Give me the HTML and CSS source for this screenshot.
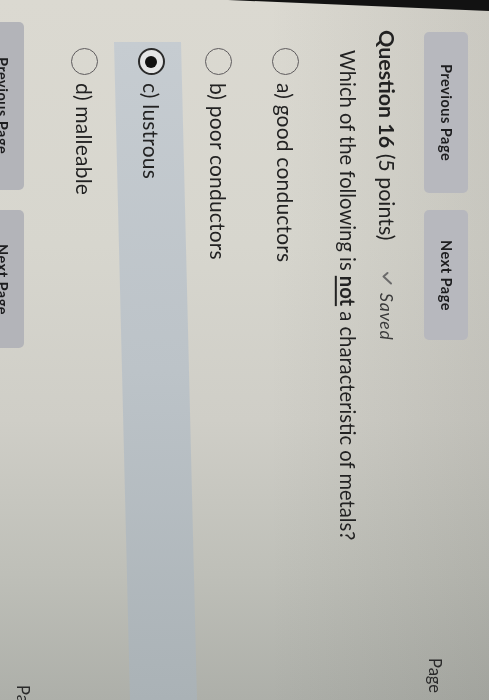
FILE: index.html
```html
<!DOCTYPE html>
<html lang="en">
<head>
<meta charset="utf-8">
<title>Question 16</title>
<link rel="stylesheet" href="styles.css">
</head>
<body>
<svg class="bezel" width="489" height="14" viewBox="0 0 489 14" aria-hidden="true"><polygon points="228,0 489,0 489,11"/></svg>
<nav class="nav nav-top">
  <div class="btn btn-prev">Previous Page</div>
  <div class="btn btn-next">Next Page</div>
  <span class="pageinfo">Page</span>
</nav>
<div class="q-header">
  <span class="q-title"><b>Question 16</b> (5 points)</span>
  <span class="saved"><svg class="check" width="14" height="14" viewBox="0 0 14 14" aria-hidden="true"><polyline points="7.5,2 3.5,5.5 11,12.5"/></svg><i>Saved</i></span>
</div>
<div class="q-text">Which of the following is <u>not</u> a characteristic of metals?</div>
<ul class="answers">
  <li class="answer"><span class="radio"></span><span class="label">a) good conductors</span></li>
  <li class="answer"><span class="radio"></span><span class="label">b) poor conductors</span></li>
  <li class="answer selected"><span class="radio checked"></span><span class="label">c) lustrous</span></li>
  <li class="answer"><span class="radio"></span><span class="label">d) malleable</span></li>
</ul>
<nav class="nav nav-bottom">
  <div class="btn btn-prev">Previous Page</div>
  <div class="btn btn-next">Next Page</div>
  <span class="pageinfo pageinfo-bottom">Page</span>
</nav>
</body>
</html>
```
FILE: styles.css
```css
html, body {
  margin: 0;
  padding: 0;
}
body {
  width: 489px;
  height: 700px;
  overflow: hidden;
  position: relative;
  writing-mode: vertical-rl;
  font-family: Lato, "Open Sans", sans-serif;
  color: #222;
  background:
    linear-gradient(to left, rgba(60, 60, 55, 0.10) 0%, rgba(60, 60, 55, 0) 45%),
    linear-gradient(to bottom, #dbd9d1 0%, #d7d6ce 35%, #cfcec7 60%, #bebfb8 82%, #adafa9 100%);
}
.bezel {
  position: absolute;
  top: 0;
  right: 0;
  fill: #121212;
}
.nav {
  display: flex;
  align-items: center;
  block-size: 44px;
  padding-inline-start: 32px;
}
.nav > * {
  flex: none;
}
.nav-top {
  margin-block-start: 21px;
}
.btn {
  display: flex;
  align-items: center;
  justify-content: center;
  box-sizing: border-box;
  block-size: 44px;
  border-radius: 5px;
  background: #b7b8be;
  color: #1d1d1f;
  font-weight: 700;
  font-size: 14.5px;
  letter-spacing: 0.5px;
  white-space: nowrap;
}
.btn-prev {
  inline-size: 161px;
}
.btn-next {
  inline-size: 130px;
  margin-inline-start: 17px;
}
.pageinfo {
  align-self: flex-end;
  margin-inline-start: 318px;
  font-size: 16.5px;
  line-height: 1.2;
  color: #2a2a2a;
  white-space: nowrap;
}
.q-header {
  display: flex;
  align-items: center;
  margin-block-start: 25px;
  padding-inline-start: 30px;
  font-size: 21.4px;
  line-height: 25px;
  white-space: nowrap;
}
.q-title b {
  font-weight: 700;
}
.saved {
  display: flex;
  align-items: center;
  margin-inline-start: 31px;
  font-size: 17.5px;
  letter-spacing: 0.8px;
  line-height: 1.2;
  color: #3a3a3a;
}
.check {
  fill: none;
  stroke: #6a6a6a;
  stroke-width: 2;
  stroke-linecap: round;
  stroke-linejoin: round;
  margin-inline-end: 8px;
}
.q-text {
  margin-block-start: 14px;
  padding-inline-start: 50px;
  font-size: 20.2px;
  line-height: 24px;
  white-space: nowrap;
}
.q-text u {
  font-weight: 700;
  text-decoration-thickness: 1.5px;
}
.answers {
  list-style: none;
  margin: 0;
  margin-block-start: 21px;
  padding: 0;
}
.answer {
  display: flex;
  align-items: center;
  box-sizing: border-box;
  position: relative;
  block-size: 67px;
  margin-inline-start: 42px;
  padding-inline-start: 6px;
  padding-left: 7px;
  font-size: 21px;
  letter-spacing: 0.2px;
  white-space: nowrap;
}
.answer.selected::before {
  content: "";
  position: absolute;
  top: 0;
  bottom: 0;
  left: 0;
  right: -16px;
  z-index: -1;
  clip-path: polygon(0 0, calc(100% - 16px) 0, 100% 100%, 16px 100%);
  background: linear-gradient(to bottom, #c6ccd1 0%, #bcc3c8 50%, #aab2b6 100%);
}
.radio {
  display: flex;
  align-items: center;
  justify-content: center;
  box-sizing: border-box;
  inline-size: 27px;
  block-size: 27px;
  margin-inline-end: 8px;
  border: 1.5px solid #5e5b5d;
  border-radius: 50%;
  flex: none;
}
.radio.checked {
  border: 2px solid #2b2b2b;
  background: #e4e5e6;
}
.radio.checked::after {
  content: "";
  inline-size: 12px;
  block-size: 12px;
  border-radius: 50%;
  background: #111;
}
.nav-bottom {
  margin-block-start: 23px;
  padding-inline-start: 22px;
}
.nav-bottom .btn {
  background: #b3b4b9;
}
.nav-bottom .btn-prev {
  inline-size: 168px;
}
.nav-bottom .btn-next {
  inline-size: 138px;
  margin-inline-start: 20px;
}
.pageinfo-bottom {
  align-self: flex-start;
  margin-block-start: -8px;
  margin-inline-start: 337px;
}
```
